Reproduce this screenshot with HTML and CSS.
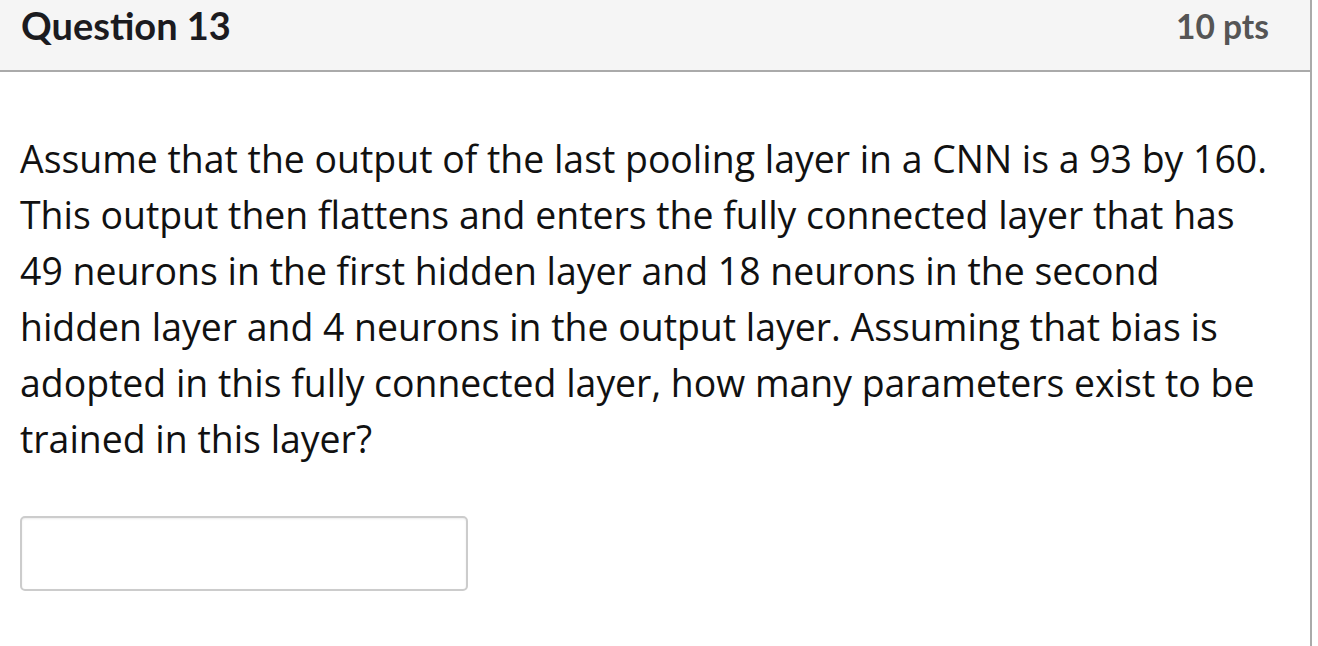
FILE: index.html
```html
<!DOCTYPE html>
<html>
<head>
<meta charset="utf-8">
<link rel="stylesheet" href="styles.css">
</head>
<body>
<div class="card">
  <div class="header">
    <span class="title">Question 13</span>
    <span class="pts">10 pts</span>
  </div>
  <div class="content">
    <p class="text">Assume that the output of the last pooling layer in a CNN is a 93 by 160. This output then flattens and enters the fully connected layer that has 49 neurons in the first hidden layer and 18 neurons in the second hidden layer and 4 neurons in the output layer. Assuming that bias is adopted in this fully connected layer, how many parameters exist to be trained in this layer?</p>
    <div class="answer"><input class="field" type="text"></div>
  </div>
</div>
</body>
</html>
```
FILE: styles.css
```css
html, body {
  margin: 0;
  padding: 0;
  background: #fff;
}
.card {
  width: 1310px;
  height: 646px;
  border-right: 2px solid #aaaaaa;
  box-sizing: content-box;
  overflow: hidden;
}
.header {
  background: #f5f5f5;
  border-bottom: 2px solid #aaaaaa;
  display: flex;
  justify-content: space-between;
  align-items: flex-start;
  padding: 0 41px 0 21px;
  box-sizing: border-box;
  height: 72px;
}
.title {
  font-family: "Lato", sans-serif;
  font-weight: 700;
  font-size: 38px;
  color: #1b1b1f;
  line-height: 51px;
}
.pts {
  font-family: "Lato", sans-serif;
  font-weight: 700;
  font-size: 33.5px;
  color: #555555;
  line-height: 53px;
}
.content {
  padding: 0 28px 0 20px;
}
.text {
  margin: 59px 0 0 0;
  font-family: "Open Sans", sans-serif;
  font-size: 37.4px;
  line-height: 56px;
  color: #111;
}
.answer {
  margin-top: 49px;
}
.field {
  display: block;
  width: 448px;
  height: 75px;
  box-sizing: border-box;
  border: 2px solid #cccccc;
  border-radius: 5px;
  box-shadow: inset 0 1px 2px rgba(0,0,0,0.08);
  margin: 0;
  padding: 0;
  background: #fff;
}
```
